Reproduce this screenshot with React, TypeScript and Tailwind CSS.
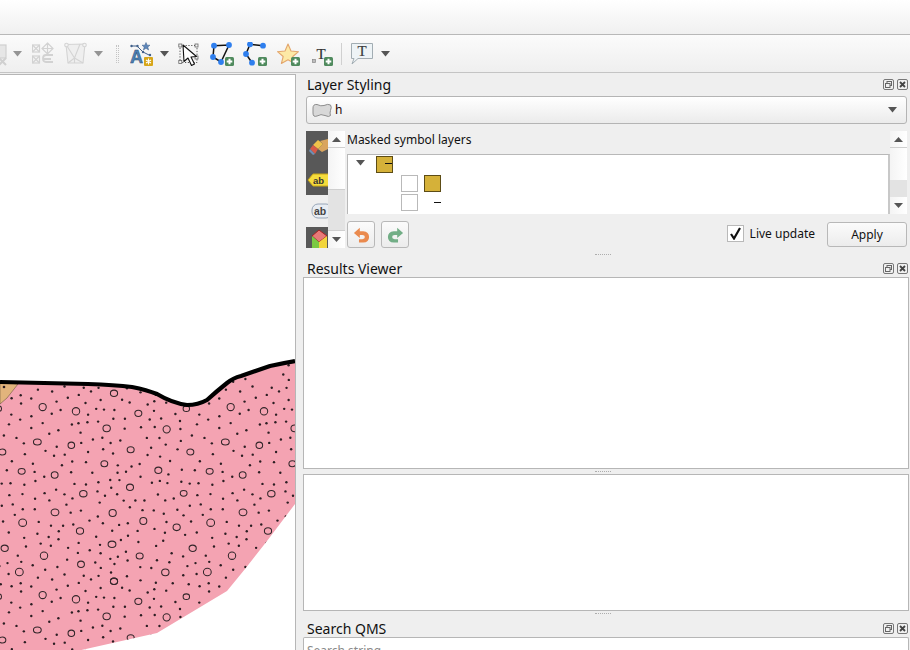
import React from "react";

const rings: [number, number, number, number][] = [
  [128,168,3.6,3.6],[228,181,3.7,3.7],[342,127,3.6,3.2],[415,187,3.5,3.1],[320,232,3.7,3.4],[500,235,3.6,3.6],
  [112,273,3.9,3],[214,283,3.3,3.2],[392,296,3.5,3],[7,303,3.5,3],[313,338,3.4,3],[65,361,3.5,2.9],
  [164,372,3.4,3.2],[475,358,3.5,3.2],[390,409,3.5,3.2],[250,428,3.7,3.2],[551,427,3.4,2.9],[165,484,3.9,3.4],
  [338,486,3.6,3.5],[430,510,3.5,3.5],[68,515,3.9,3.7],[530,529,3.6,3.3],[240,540,3.6,3.2],[336,580,3.9,3.2],
  [14,592,3.6,3.2],[132,614,3.7,3.7],[419,615,3.5,3],[243,640,3.4,3.2],[58,663,3.9,3.8],[496,664,3.7,3.4],
  [342,691,3.6,3.2],[559,173,3.2,2.8],
];

function makeDots() {
  const T = 188;
  let s = 20240611;
  const r = () => {
    s = (s + 0x6d2b79f5) | 0;
    let t = Math.imul(s ^ (s >>> 15), 1 | s);
    t = (t + Math.imul(t ^ (t >>> 7), 61 | t)) ^ t;
    return ((t ^ (t >>> 14)) >>> 0) / 4294967296;
  };
  const dist = (a: number, b: number, c: number, d: number) => {
    const dx = Math.min(Math.abs(a - c), T - Math.abs(a - c));
    const dy = Math.min(Math.abs(b - d), T - Math.abs(b - d));
    return Math.hypot(dx, dy);
  };
  const out: [number, number][] = [];
  for (let n = 0; n < 205; n++) {
    let best: [number, number] = [0, 0];
    let bestD = -1;
    for (let k = 0; k < 14; k++) {
      const x = r() * T;
      const y = r() * T;
      let d = 1e9;
      for (const p of out) d = Math.min(d, dist(x, y, p[0], p[1]));
      for (const q of rings) d = Math.min(d, dist(x, y, q[0] / 3, q[1] / 3) - 2);
      if (d > bestD) {
        bestD = d;
        best = [x, y];
      }
    }
    out.push(best);
  }
  return out;
}
const dots = makeDots();

function MapView() {
  const top =
    "M0 381L88 383Q115 384 132 386Q147 389 157 393Q172 402 187 404Q198 404 207 399Q217 390 227 382Q233 377 241 375L270 365Q283 362 295 360";
  const shape = `${top}L295 503L267 540L245 568L227 590L157 632L77 650L0 650Z`;
  const tiles: [number, number][] = [];
  for (const i of [-1, 0, 1]) for (const j of [0, 1]) tiles.push([i * 188, 350 + j * 188]);
  return (
    <svg className="block" width="295" height="576" viewBox="0 74 295 576">
      <defs>
        <clipPath id="shape">
          <path d={shape} />
        </clipPath>
        <g id="tile">
          {dots.map(([x, y], k) => (
            <circle key={k} cx={x} cy={y} r="1.2" fill="#2b1d22" />
          ))}
          {rings.map(([x, y, a, b], k) => (
            <ellipse key={k} cx={x / 3} cy={y / 3} rx={a} ry={b} fill="none" stroke="#33262a" strokeWidth="1.05" />
          ))}
        </g>
      </defs>
      <path d={shape} fill="#f4a3b2" />
      <g clipPath="url(#shape)">
        {tiles.map(([x, y], k) => (
          <use key={k} href="#tile" x={x} y={y} />
        ))}
        <polygon points="0,381 18,383 7,397 0,403" fill="#e2b47c" stroke="#5b4a32" strokeWidth="0.5" />
        <circle cx="4" cy="386" r="1.3" fill="#2b1d22" />
      </g>
      <path d={top} fill="none" stroke="#000" strokeWidth="4.2" strokeLinejoin="round" />
    </svg>
  );
}

function Arrow({ className = "" }: { className?: string }) {
  return (
    <svg width="9" height="6" viewBox="0 0 9 6" className={className}>
      <path d="M0 0H9L4.5 5.5Z" fill="#555" />
    </svg>
  );
}

function Plus({ x, y }: { x: number; y: number }) {
  return (
    <g transform={`translate(${x} ${y})`}>
      <rect width="9" height="9" rx="1.5" fill="#4f8a5d" />
      <path d="M4.5 1.7V7.3M1.7 4.5H7.3" stroke="#fff" strokeWidth="2" />
    </g>
  );
}

function Icon({ w, children, className = "" }: { w: number; children: React.ReactNode; className?: string }) {
  return (
    <svg width={w} height="24" viewBox={`0 0 ${w} 24`} className={`shrink-0 ${className}`}>
      {children}
    </svg>
  );
}

function Node({ x, y }: { x: number; y: number }) {
  return <circle cx={x} cy={y} r="2.9" fill="#2f7fee" />;
}

function Toolbar() {
  return (
    <div className="flex h-[38px] shrink-0 items-center overflow-hidden border-b border-[#c4c4c4] bg-linear-to-b from-[#fbfbfb] to-[#efefef]">
      <Icon w={9}>
        <g stroke="#d0d0d0" strokeWidth="1.2" fill="#e6e6e6">
          <rect x="-8" y="3" width="14" height="13" />
          <path d="M-2 15L6 23M6 16L-1 23" fill="none" strokeWidth="2" />
        </g>
      </Icon>
      <Arrow className="ml-[4px] opacity-60" />
      <Icon w={22} className="ml-[10px]">
        <g stroke="#d2d2d2" strokeWidth="1.2" fill="none">
          <rect x="0.5" y="3" width="7" height="7" />
          <path d="M0.5 3L7.5 10M7.5 3L0.5 10" />
          <rect x="0.5" y="14" width="7" height="7" />
          <path d="M0.5 14L7.5 21M7.5 14L0.5 21" />
          <path d="M15.5 1L21 6.5L15.5 12L10 6.5ZM10 6.5H21M15.5 1V12" />
          <path d="M21 13H14Q11 13 11 16.5T14 20H21M11 17H19" strokeWidth="1.8" />
        </g>
      </Icon>
      <Icon w={23} className="ml-[10px]">
        <g stroke="#d4d4d4" strokeWidth="1.1" fill="#efefef">
          <path d="M2 2.5L21 2L19 21H4Z" />
          <path d="M2 2.5L10.5 16L16 2M10.5 16L4 21M10.5 16L19 21M10.5 16V21" fill="none" />
          <circle cx="2.5" cy="3" r="1.8" fill="#f4f4f4" />
          <circle cx="20.5" cy="3" r="1.8" fill="#f4f4f4" />
        </g>
      </Icon>
      <Arrow className="ml-[7px] opacity-60" />
      <div className="ml-[13px] h-[18px] w-[3px] border-x border-dotted border-[#c4c4c4]" />
      <Icon w={24} className="ml-[11px]">
        <path d="M1 4H7L13 10L19 13" fill="none" stroke="#41608a" strokeWidth="1" />
        <circle cx="1.5" cy="4" r="1.2" fill="#41608a" />
        <circle cx="7.5" cy="4" r="1.2" fill="#41608a" />
        <circle cx="13" cy="10" r="1.2" fill="#41608a" />
        <circle cx="20" cy="13" r="1.2" fill="#41608a" />
        <path d="M16 0.5L17.2 3.2H20L17.8 5L18.6 8L16 6.3L13.4 8L14.2 5L12 3.2H14.8Z" fill="#5d86b8" stroke="#3f6391" strokeWidth="0.5" />
        <text x="0" y="20.5" fontFamily="'Liberation Sans',sans-serif" fontWeight="700" fontSize="18" fill="#4c80b4" stroke="#2e4d73" strokeWidth="0.5">A</text>
        <rect x="14" y="15" width="9" height="9" rx="1" fill="#d7a619" />
        <path d="M18.5 16.5V22.5M16 18L21 21M21 18L16 21" stroke="#fff" strokeWidth="1.1" />
      </Icon>
      <Arrow className="ml-[6px]" />
      <Icon w={22} className="ml-[9px]">
        <rect x="2" y="3.5" width="17" height="17" fill="none" stroke="#555" strokeWidth="1" strokeDasharray="1.2 1.6" />
        <g fill="#f4f4f4" stroke="#666" strokeWidth="0.8">
          <rect x="0.8" y="2" width="3" height="3" />
          <rect x="17" y="2" width="3" height="3" />
          <rect x="0.8" y="18.5" width="3" height="3" />
          <rect x="17" y="14" width="3" height="3" />
        </g>
        <path d="M5 3L6 19.5L10 16L13.5 23.5L16.5 22L13 15L18.5 14.5Z" fill="#fff" stroke="#111" strokeWidth="1.1" strokeLinejoin="round" />
      </Icon>
      <Icon w={25} className="ml-[10px]">
        <path d="M4 3.7L19 3L11 20L3 15Z" fill="none" stroke="#111" strokeWidth="1.5" />
        <Node x={4} y={3.7} />
        <Node x={19} y={3} />
        <Node x={11} y={20} />
        <Node x={3} y={15} />
        <Plus x={15} y={15} />
      </Icon>
      <Icon w={25} className="ml-[8px]">
        <path d="M20 3.7L7 2.3L3 12L9 20.7" fill="none" stroke="#111" strokeWidth="1.5" />
        <Node x={20} y={3.7} />
        <Node x={7} y={2.3} />
        <Node x={3} y={12} />
        <Node x={9} y={20.7} />
        <Plus x={15} y={15} />
      </Icon>
      <Icon w={25} className="ml-[9px]">
        <path d="M11 2L14 9L21.5 9.7L15.8 14.5L17.6 21.5L11 17.8L4.4 21.5L6.2 14.5L0.5 9.7L8 9Z" fill="#fde9a6" stroke="#e3a66d" strokeWidth="1.1" strokeLinejoin="round" />
        <Plus x={14} y={15} />
      </Icon>
      <Icon w={23} className="ml-[9px]">
        <rect x="1.5" y="17.5" width="3" height="3" fill="#bdbdbd" stroke="#888" strokeWidth="0.7" />
        <text x="5.5" y="17" fontFamily="'Liberation Serif',serif" fontWeight="400" fontSize="15" fill="#333" stroke="#333" strokeWidth="0.2">T</text>
        <Plus x={13} y={15} />
      </Icon>
      <div className="ml-[7px] h-[22px] w-px bg-[#d0d0d0]" />
      <Icon w={25} className="ml-[8px]">
        <path d="M1.5 1.5H22.5V16.5H8L2 22L4 16.5H1.5Z" fill="#edf3f6" stroke="#a2adb3" strokeWidth="1" />
        <text x="7.5" y="14" fontFamily="'Liberation Serif',serif" fontWeight="400" fontSize="15" fill="#3c3c3c" stroke="#3c3c3c" strokeWidth="0.2">T</text>
      </Icon>
      <Arrow className="ml-[6px]" />
    </div>
  );
}

function DockButtons() {
  return (
    <div className="flex gap-[3px]">
      <svg width="11" height="11" viewBox="0 0 11 11">
        <rect x="0.5" y="0.5" width="10" height="10" rx="1.5" fill="#f0f0f0" stroke="#777" />
        <rect x="4" y="2.5" width="4.5" height="4" fill="none" stroke="#666" />
        <rect x="2.5" y="4.5" width="4.5" height="4" fill="#f0f0f0" stroke="#666" />
      </svg>
      <svg width="11" height="11" viewBox="0 0 11 11">
        <rect x="0.5" y="0.5" width="10" height="10" rx="1.5" fill="#f0f0f0" stroke="#777" />
        <path d="M3 3L8 8M8 3L3 8" stroke="#444" strokeWidth="1.8" />
      </svg>
    </div>
  );
}

function ScrollBtn({ up }: { up?: boolean }) {
  return (
    <div className="flex h-[16px] shrink-0 items-center justify-center">
      <svg width="9" height="5" viewBox="0 0 9 5">
        <path d={up ? "M0 5H9L4.5 0Z" : "M0 0H9L4.5 5Z"} fill="#555" />
      </svg>
    </div>
  );
}

function SideIcons() {
  return (
    <div className="flex h-[117px] w-[22px] shrink-0 flex-col overflow-hidden">
      <div className="h-[64px] shrink-0 bg-[#585858]">
        <svg width="22" height="64" viewBox="0 0 22 64">
          <path d="M14 10L22 8V18L16 21L12 18L17 13Z" fill="#d9a45d" />
          <path d="M7 14L12 9L17 13L12 18Z" fill="#efc24a" />
          <path d="M4 18L7 14L12 18L9 23Z" fill="#d65a48" />
          <path d="M4 18L9 23L7 24L3 20Z" fill="#6f8fb5" />
          <path d="M2 49L7 43H26V55H7Z" fill="#f5dc3d" stroke="#c9a817" />
          <text x="7" y="52.5" fontFamily="'Liberation Sans',sans-serif" fontWeight="700" fontSize="9.5" fill="#333">ab</text>
        </svg>
      </div>
      <div className="h-[32px] shrink-0">
        <svg width="22" height="32" viewBox="0 0 22 32">
          <rect x="6" y="9" width="20" height="14" rx="6" fill="#e8edf3" stroke="#98a6b8" />
          <text x="8" y="20" fontFamily="'Liberation Sans',sans-serif" fontWeight="700" fontSize="10.5" fill="#444">ab</text>
        </svg>
      </div>
      <div className="h-[21px] shrink-0 bg-[#585858]">
        <svg width="22" height="21" viewBox="0 0 22 21">
          <path d="M6 9L13 3L21 9L13 15Z" fill="#e87a78" stroke="#a81f22" />
          <path d="M6 9V21H13V15Z" fill="#7ac943" />
          <path d="M13 15V21H21V9Z" fill="#f2d53c" />
        </svg>
      </div>
    </div>
  );
}

function ToolBtn({ children }: { children: React.ReactNode }) {
  return (
    <div className="flex h-[27px] w-[28px] items-center justify-center rounded-[3px] border border-[#b8b8b8] bg-linear-to-b from-[#fbfbfb] to-[#ececec]">
      {children}
    </div>
  );
}

function Checkbox() {
  return <div className="h-[17px] w-[17px] shrink-0 border border-[#b9b9b9] bg-white" />;
}

function LayerStyling() {
  return (
    <>
      <div className="flex h-[23px] shrink-0 items-center justify-between pl-[11px] pr-[2px]">
        <span className="text-[14px] leading-none text-[#111]">Layer Styling</span>
        <DockButtons />
      </div>
      <div className="ml-[10px] mr-[3px] flex h-[28px] shrink-0 items-center rounded-[3px] border border-[#b4b4b4] bg-linear-to-b from-[#ffffff] to-[#ebebeb] pl-[5px] pr-[9px]">
        <svg width="20" height="15" viewBox="0 0 20 15">
          <path d="M1 5Q1 1 5 1.5Q9 3.5 12 2.5Q16 0.5 18.5 2Q20 4 18.5 7.5Q17.5 10 18.5 12.5Q17 14.5 13 12.5Q9 10.5 5 13Q1 14.5 1 10Z" fill="#d8d8d8" stroke="#8d8d8d" />
        </svg>
        <span className="ml-[3px] text-[12px] leading-none text-[#200]">h</span>
        <Arrow className="ml-auto" />
      </div>
      <div className="ml-[10px] mr-[3px] mt-[7px] flex h-[117px] shrink-0">
        <SideIcons />
        <div className="flex w-[17px] shrink-0 flex-col bg-linear-to-r from-[#f4f4f4] to-[#ffffff]">
          <div className="border-b border-[#cfcfcf]">
            <ScrollBtn up />
          </div>
          <div className="mt-[41px] h-[42px] border-y border-[#cfcfcf] bg-[#e3e3e3]" />
          <ScrollBtn />
        </div>
        <div className="flex min-w-0 flex-1 flex-col">
          <div className="flex h-[83px] shrink-0">
            <div className="flex min-w-0 flex-1 flex-col pl-[2px]">
              <div className="flex h-[23px] shrink-0 items-start pt-px text-[12px] leading-[15px] text-[#111]">Masked symbol layers</div>
              <div className="flex-1 border-l border-t border-r-2 border-[#b8b8b8] border-r-[#c8c8c8] bg-white">
                <div className="flex h-[19px] items-center pl-[8px]">
                  <Arrow className="-mt-[4px]" />
                  <div className="relative ml-[11px] h-[17px] w-[17px] border border-[#5c4c16] bg-[#d5b139]">
                    <div className="absolute right-0 top-[6px] h-px w-[7px] bg-[#111]" />
                  </div>
                </div>
                <div className="ml-[53px] flex h-[19px] items-center">
                  <Checkbox />
                  <div className="ml-[6px] h-[17px] w-[17px] border border-[#5c4c16] bg-[#d5b139]" />
                </div>
                <div className="ml-[53px] flex h-[19px] items-center">
                  <Checkbox />
                  <div className="ml-[16px] h-px w-[7px] bg-[#111]" />
                </div>
              </div>
            </div>
            <div className="flex w-[17px] shrink-0 flex-col bg-linear-to-r from-[#f4f4f4] to-[#ffffff]">
              <div className="border-b border-[#cfcfcf]">
                <ScrollBtn up />
              </div>
              <div className="mt-[32px] h-[17px] bg-[#e3e3e3]" />
              <ScrollBtn />
            </div>
          </div>
          <div className="flex flex-1 items-start pl-[2px] pt-[7px]">
            <ToolBtn>
              <svg width="17" height="16" viewBox="0 0 20 19">
                <path d="M8 1L1 7L8 13V9.5H11Q14 9.5 14 12T11 14.5H7V18.5H12Q19 18.5 19 12T12 5H8Z" fill="#ea8a4e" />
              </svg>
            </ToolBtn>
            <div className="ml-[6px]">
              <ToolBtn>
                <svg width="17" height="16" viewBox="0 0 20 19">
                  <path d="M12 1L19 7L12 13V9.5H9Q6 9.5 6 12T9 14.5H13V18.5H8Q1 18.5 1 12T8 5H12Z" fill="#72ae86" />
                </svg>
              </ToolBtn>
            </div>
            <div className="ml-auto mt-[4px] flex h-[17px] items-center">
              <div className="flex h-[17px] w-[17px] items-center justify-center border border-[#b9b9b9] bg-white">
                <svg width="13" height="13" viewBox="0 0 13 13">
                  <path d="M2 7L5 11.5L11 1" fill="none" stroke="#111" strokeWidth="2.2" />
                </svg>
              </div>
              <span className="ml-[6px] text-[12px] leading-none text-[#111]">Live update</span>
            </div>
            <div className="ml-[12px] mt-[1px] flex h-[25px] w-[80px] items-center justify-center rounded-[3px] border border-[#b8b8b8] bg-linear-to-b from-[#fbfbfb] to-[#ececec] text-[12px] leading-none text-[#111]">
              Apply
            </div>
          </div>
        </div>
      </div>
    </>
  );
}

function Splitter({ h }: { h: string }) {
  return (
    <div className={`flex shrink-0 items-center justify-center ${h}`}>
      <div className="h-px w-[16px] border-t border-dotted border-[#adadad]" />
    </div>
  );
}

export default function App() {
  return (
    <div className="flex h-[650px] w-[910px] flex-col overflow-hidden bg-[#efefef] font-['Noto_Sans',sans-serif]">
      <div className="h-[35px] shrink-0 border-b border-[#b8b8b8] bg-linear-to-b from-[#ffffff] to-[#f0f0f0]" />
      <Toolbar />
      <div className="flex min-h-0 flex-1">
        <div className="mt-px h-[576px] w-[296px] shrink-0 overflow-hidden border-r border-t border-[#b6b6b6] bg-white">
          <MapView />
        </div>
        <div className="flex min-w-0 flex-1 flex-col">
          <LayerStyling />
          <Splitter h="h-[12px]" />
          <div className="flex h-[17px] shrink-0 items-center justify-between pl-[11px] pr-[2px]">
            <span className="text-[14px] leading-none text-[#111]">Results Viewer</span>
            <DockButtons />
          </div>
          <div className="ml-[7px] mr-px h-[192px] shrink-0 border border-[#b6b6b6] bg-white" />
          <Splitter h="h-[5px]" />
          <div className="ml-[7px] mr-px h-[137px] shrink-0 border border-[#b6b6b6] bg-white" />
          <Splitter h="h-[5px]" />
          <div className="mt-[4px] flex h-[17px] shrink-0 items-center justify-between pl-[11px] pr-[2px]">
            <span className="text-[14px] leading-none text-[#111]">Search QMS</span>
            <DockButtons />
          </div>
          <div className="ml-[7px] mr-px flex-1 rounded-t-[2px] border border-b-0 border-[#b6b6b6] bg-white pl-[3px] pt-[5px] text-[12px] leading-[15px] text-[#8a8a8a]">
            Search string
          </div>
        </div>
      </div>
    </div>
  );
}
